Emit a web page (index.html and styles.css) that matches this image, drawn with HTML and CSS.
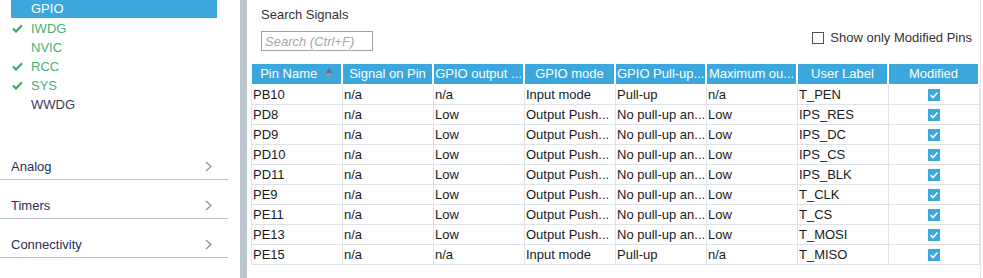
FILE: index.html
```html
<!DOCTYPE html>
<html lang="en">
<head>
  <meta charset="UTF-8">
  <title>Pinout &amp; Configuration - GPIO</title>
  <link rel="stylesheet" href="styles.css">
</head>
<body>

  <aside class="sidebar">
    <ul class="periph-list">
      <li class="periph active"><span class="tick"></span>GPIO</li>
      <li class="periph ok"><span class="tick"><svg width="11" height="9" viewBox="0 0 11 9"><path d="M1 4.5 L4 7.5 L10 1.2" fill="none" stroke="#3aa867" stroke-width="2.2"/></svg></span>IWDG</li>
      <li class="periph ok"><span class="tick"></span>NVIC</li>
      <li class="periph ok"><span class="tick"><svg width="11" height="9" viewBox="0 0 11 9"><path d="M1 4.5 L4 7.5 L10 1.2" fill="none" stroke="#3aa867" stroke-width="2.2"/></svg></span>RCC</li>
      <li class="periph ok"><span class="tick"><svg width="11" height="9" viewBox="0 0 11 9"><path d="M1 4.5 L4 7.5 L10 1.2" fill="none" stroke="#3aa867" stroke-width="2.2"/></svg></span>SYS</li>
      <li class="periph"><span class="tick"></span>WWDG</li>
    </ul>

    <div class="category">
      <span>Analog</span>
      <svg class="chev" width="7" height="11" viewBox="0 0 7 11"><path d="M1 1 L6 5.5 L1 10" fill="none" stroke="#8c8c8c" stroke-width="1.2"/></svg>
    </div>
    <div class="category">
      <span>Timers</span>
      <svg class="chev" width="7" height="11" viewBox="0 0 7 11"><path d="M1 1 L6 5.5 L1 10" fill="none" stroke="#8c8c8c" stroke-width="1.2"/></svg>
    </div>
    <div class="category">
      <span>Connectivity</span>
      <svg class="chev" width="7" height="11" viewBox="0 0 7 11"><path d="M1 1 L6 5.5 L1 10" fill="none" stroke="#8c8c8c" stroke-width="1.2"/></svg>
    </div>
    <div class="category">
      <span></span>
      <svg class="chev" width="7" height="11" viewBox="0 0 7 11"><path d="M1 1 L6 5.5 L1 10" fill="none" stroke="#8c8c8c" stroke-width="1.2"/></svg>
    </div>
  </aside>

  <div class="splitter"></div>

  <main class="panel">
    <div class="toolbar">
      <div class="search-box">
        <div class="search-title">Search Signals</div>
        <input type="text" class="search-input" placeholder="Search (Ctrl+F)">
      </div>
      <label class="modified-only">
        <span class="box"></span>
        Show only Modified Pins
      </label>
    </div>

    <div class="grid">
      <div class="grid-row head">
        <div class="cell">Pin Name <svg class="sort" width="8" height="11" viewBox="0 0 8 11"><path d="M4 0.5 L7.5 5 L0.5 5 Z" fill="#5d6f7f"/><path d="M0.5 6 L7.5 6 L4 10.5 Z" fill="#7f9db3"/></svg></div>
        <div class="cell">Signal on Pin</div>
        <div class="cell">GPIO output ...</div>
        <div class="cell">GPIO mode</div>
        <div class="cell">GPIO Pull-up...</div>
        <div class="cell">Maximum ou...</div>
        <div class="cell">User Label</div>
        <div class="cell">Modified</div>
      </div>
    </div>
  </main>

  <script>
    const pins = [
      ["PB10", "n/a", "n/a", "Input mode", "Pull-up", "n/a", "T_PEN"],
      ["PD8", "n/a", "Low", "Output Push...", "No pull-up an...", "Low", "IPS_RES"],
      ["PD9", "n/a", "Low", "Output Push...", "No pull-up an...", "Low", "IPS_DC"],
      ["PD10", "n/a", "Low", "Output Push...", "No pull-up an...", "Low", "IPS_CS"],
      ["PD11", "n/a", "Low", "Output Push...", "No pull-up an...", "Low", "IPS_BLK"],
      ["PE9", "n/a", "Low", "Output Push...", "No pull-up an...", "Low", "T_CLK"],
      ["PE11", "n/a", "Low", "Output Push...", "No pull-up an...", "Low", "T_CS"],
      ["PE13", "n/a", "Low", "Output Push...", "No pull-up an...", "Low", "T_MOSI"],
      ["PE15", "n/a", "n/a", "Input mode", "Pull-up", "n/a", "T_MISO"]
    ];

    const checkSvg = '<svg width="12" height="12" viewBox="0 0 12 12"><rect width="12" height="12" fill="#3ba7dd"/><path d="M2.5 6 L5 8.5 L9.5 3.5" fill="none" stroke="#fff" stroke-width="1.6"/></svg>';

    const grid = document.querySelector(".grid");
    pins.forEach(function(pin) {
      const row = document.createElement("div");
      row.className = "grid-row";
      pin.forEach(function(value) {
        const cell = document.createElement("div");
        cell.className = "cell";
        cell.textContent = value;
        row.appendChild(cell);
      });
      const mod = document.createElement("div");
      mod.className = "cell check";
      mod.innerHTML = checkSvg;
      row.appendChild(mod);
      grid.appendChild(row);
    });
  </script>

</body>
</html>
```

FILE: styles.css
```css
body {
  font-family: "Liberation Sans", Arial, sans-serif;
  font-size: 13px;
  margin: 0;
  background: #fff;
  display: flex;
  height: 278px;
  overflow: hidden;
  color: #1a1a1a;
}

/* left tree */

.sidebar {
  width: 240px;
  flex-shrink: 0;
  background: #fff;
}

.periph-list {
  list-style: none;
  margin: 0 0 0 11px;
  padding: 0;
  width: 206px;
}

.periph {
  display: flex;
  align-items: center;
  height: 19px;
  line-height: 19px;
  color: #3b3b5a;
}

.periph .tick {
  width: 20px;
  display: flex;
  align-items: center;
  padding-left: 1px;
  box-sizing: border-box;
}

.periph.ok {
  color: #45b172;
}

.periph.active {
  background: #3ba7dd;
  color: #fff;
  height: 18px;
  line-height: 18px;
  margin-bottom: 1px;
}

.category {
  width: 228px;
  box-sizing: border-box;
  height: 39px;
  padding: 16px 16px 3px 11px;
  border-bottom: 1px solid #b9c2ca;
  display: flex;
  align-items: center;
  justify-content: space-between;
  color: #27305a;
  line-height: 19px;
}

.periph-list + .category {
  margin-top: 27px;
}

.splitter {
  width: 7px;
  flex-shrink: 0;
  background: #b9c4cb;
}

/* right panel */

.panel {
  width: 729px;
  flex-shrink: 0;
  padding-left: 4px;
  border-right: 1px solid #e4e6e9;
}

.toolbar {
  display: flex;
  justify-content: space-between;
  align-items: flex-end;
  padding: 6px 8px 0 10px;
}

.search-title {
  line-height: 18px;
  color: #333;
}

.search-input {
  display: block;
  margin-top: 7px;
  width: 112px;
  height: 20px;
  box-sizing: border-box;
  border: 1px solid #a3a3a3;
  padding: 0 3px;
  font-family: "Liberation Sans", Arial, sans-serif;
  font-size: 13px;
  outline: none;
}

.search-input::placeholder {
  color: #a6a6a6;
  font-style: italic;
}

.modified-only {
  display: flex;
  align-items: center;
  gap: 6px;
  line-height: 18px;
  margin-bottom: 4px;
  color: #333;
}

.modified-only .box {
  width: 10px;
  height: 10px;
  border: 1px solid #555;
  background: #fff;
}

/* pin table */

.grid {
  margin-top: 13px;
  width: 729px;
}

.grid-row {
  display: grid;
  grid-template-columns: repeat(8, 91px);
  border-left: 1px solid #dfe2e6;
  height: 20px;
}

.grid-row .cell {
  box-sizing: border-box;
  height: 20px;
  line-height: 19px;
  padding: 0 2px 0 1px;
  border-right: 1px solid #dfe2e6;
  border-bottom: 1px solid #dfe2e6;
  white-space: nowrap;
  overflow: hidden;
}

.grid-row.head {
  border-left: 1px solid #fff;
  height: 21px;
}

.grid-row.head .cell {
  height: 21px;
  line-height: 20px;
  background: #3ba7dd;
  background-clip: padding-box;
  color: #fff;
  text-align: center;
  border-right: 2px solid #fff;
  border-bottom: 1px solid #fff;
  padding: 0 1px;
}

.sort {
  vertical-align: -1px;
  margin-left: 4px;
}

.cell.check {
  display: flex;
  align-items: center;
  justify-content: center;
  padding: 0;
}
```
